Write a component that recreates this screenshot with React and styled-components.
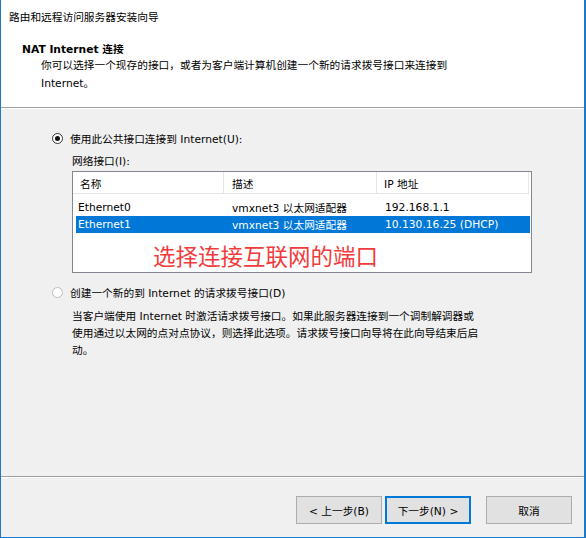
import React from "react"
import styled, { createGlobalStyle } from "styled-components"

const GlobalStyle = createGlobalStyle`
* {
  box-sizing: border-box;
  margin: 0;
  padding: 0;
}

html,
body {
  margin: 0;
  background: #fff;
  color: #000;
  font-family: "DejaVu Sans", "Noto Sans CJK SC", sans-serif;
  font-size: 10.7px;
}
`

const Window = styled.div`
  width: 586px;
  height: 538px;
  display: flex;
  flex-direction: column;
  border-left: 1px solid #1979ca;
  border-right: 2px solid #1979ca;
  border-bottom: 1px solid #1979ca;
  background: #f0f0f0;
`

const TitleBar = styled.div`
  height: 32px;
  display: flex;
  align-items: center;
  padding-left: 8px;
  background: #fff;
`

const Header = styled.div`
  height: 76px;
  background: #fff;
  padding: 11px 0 0 21px;
  border-bottom: 1px solid #a0a0a0;
`

const Heading = styled.h1`
  font-size: 10.7px;
  font-weight: bold;
  line-height: 14px;
`

const HeaderText = styled.p`
  padding-left: 19px;
  line-height: 18px;
`

const Rule = styled.div`
  height: 1px;
  background: #fff;
`

const Body = styled.div`
  flex: 1;
  padding: 20px 0 0 51px;
`

const OptionRow = styled.label`
  display: flex;
  align-items: center;
  gap: 7px;
  height: 18px;
  margin-top: ${(p) => p.$top || 0}px;
`

const Radio = styled.span`
  width: 11px;
  height: 11px;
  border-radius: 50%;
  border: 1px solid ${(p) => (p.$checked ? "#333" : "#bcbcbc")};
  background: #fff;
  display: flex;
  align-items: center;
  justify-content: center;

  &::after {
    content: "";
    width: 5px;
    height: 5px;
    border-radius: 50%;
    background: ${(p) => (p.$checked ? "#111" : "transparent")};
  }
`

const Group = styled.div`
  margin-left: 20px;
`

const FieldLabel = styled.div`
  margin-top: 6px;
  line-height: 18px;
`

const ListBox = styled.div`
  position: relative;
  width: 460px;
  height: 102px;
  background: #fff;
  border: 1px solid #828790;
`

const ListHead = styled.div`
  display: grid;
  grid-template-columns: 151px 153px 152px;
  height: 22px;
`

const HeadCell = styled.div`
  display: flex;
  align-items: center;
  padding-left: ${(p) => p.$pad}px;
  border-right: 1px solid #e5e5e5;
  border-bottom: 1px solid #e5e5e5;
  padding-top: 1px;
`

const Rows = styled.div`
  padding: 5px 0 0 3px;
`

const Row = styled.div`
  display: grid;
  grid-template-columns: 148px 153px 1fr;
  height: 17px;
  align-items: center;
  width: 454px;
  background: ${(p) => (p.$selected ? "#0078d7" : "transparent")};
  color: ${(p) => (p.$selected ? "#fff" : "#000")};
`

const Cell = styled.div`
  padding-left: ${(p) => p.$pad}px;
  white-space: nowrap;
`

const Annotation = styled.div`
  position: absolute;
  left: 80px;
  top: 71px;
  font-family: "Noto Sans CJK SC", sans-serif;
  font-size: 22.5px;
  line-height: 24px;
  color: #f23b3b;
`

const Description = styled.p`
  margin: 7px 0 0 20px;
  line-height: 17px;
`

const Footer = styled.div`
  height: 61px;
  border-top: 1px solid #a0a0a0;
  box-shadow: inset 0 1px 0 #fff;
  display: flex;
  justify-content: flex-end;
  align-items: flex-start;
  padding: 19px 12px 0 0;
`

const Button = styled.button`
  width: 86px;
  height: 28px;
  margin-left: ${(p) => p.$gap}px;
  background: #e1e1e1;
  border: ${(p) => (p.$focused ? "2px solid #0078d7" : "1px solid #adadad")};
  font-family: inherit;
  font-size: 10.7px;
  color: #000;
  display: flex;
  align-items: center;
  justify-content: center;
`

const adapters = [
  { name: "Ethernet0", desc: "vmxnet3 以太网适配器", ip: "192.168.1.1" },
  { name: "Ethernet1", desc: "vmxnet3 以太网适配器", ip: "10.130.16.25 (DHCP)", selected: true },
]

const App = () => {
  return (
    <>
      <GlobalStyle />
      <Window>
        <TitleBar>路由和远程访问服务器安装向导</TitleBar>
        <Header>
          <Heading>NAT Internet 连接</Heading>
          <HeaderText>
            你可以选择一个现存的接口，或者为客户端计算机创建一个新的请求拨号接口来连接到
            <br />
            Internet。
          </HeaderText>
        </Header>
        <Rule />
        <Body>
          <OptionRow>
            <Radio $checked />
            使用此公共接口连接到 Internet(U):
          </OptionRow>
          <Group>
            <FieldLabel>网络接口(I):</FieldLabel>
            <ListBox>
              <ListHead>
                <HeadCell $pad={7}>名称</HeadCell>
                <HeadCell $pad={8}>描述</HeadCell>
                <HeadCell $pad={7}>IP 地址</HeadCell>
              </ListHead>
              <Rows>
                {adapters.map((a) => (
                  <Row key={a.name} $selected={a.selected}>
                    <Cell $pad={2}>{a.name}</Cell>
                    <Cell $pad={8}>{a.desc}</Cell>
                    <Cell $pad={8}>{a.ip}</Cell>
                  </Row>
                ))}
              </Rows>
              <Annotation>选择连接互联网的端口</Annotation>
            </ListBox>
          </Group>
          <OptionRow $top={10}>
            <Radio />
            创建一个新的到 Internet 的请求拨号接口(D)
          </OptionRow>
          <Description>
            当客户端使用 Internet 时激活请求拨号接口。如果此服务器连接到一个调制解调器或
            <br />
            使用通过以太网的点对点协议，则选择此选项。请求拨号接口向导将在此向导结束后启
            <br />
            动。
          </Description>
        </Body>
        <Footer>
          <Button>&lt; 上一步(B)</Button>
          <Button $gap={3} $focused>
            下一步(N) &gt;
          </Button>
          <Button $gap={15}>取消</Button>
        </Footer>
      </Window>
    </>
  )
}

export default App
